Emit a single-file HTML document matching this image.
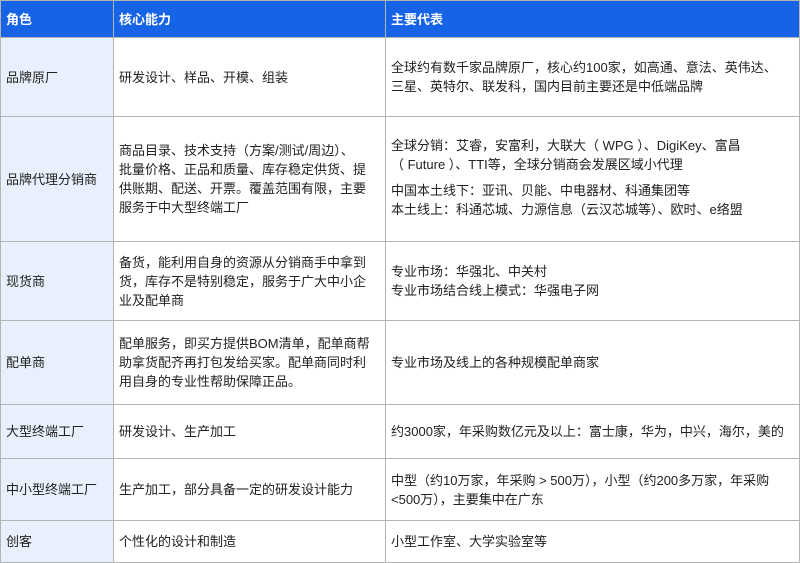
<!DOCTYPE html>
<html><head><meta charset="utf-8"><style>
*{margin:0;padding:0;box-sizing:border-box}
body{width:800px;height:563px;overflow:hidden;background:#fff;font-family:"Liberation Sans","Noto Sans CJK SC",sans-serif;font-size:13px;color:#222}
.c{position:absolute;display:flex;align-items:center;padding:0 5px;line-height:19px;border-right:1px solid #b4b4b4;border-bottom:1px solid #b4b4b4;white-space:nowrap}
.h{background:#1763e6;color:#fff;font-weight:bold}
.f{background:#e8f0fd}
</style></head><body>
<div class="c h" style="left:0;top:0;width:114px;height:38px;border-left:1px solid #b4b4b4;border-top:1px solid #b4b4b4">角色</div>
<div class="c h" style="left:114px;top:0;width:272px;height:38px;border-top:1px solid #b4b4b4">核心能力</div>
<div class="c h" style="left:386px;top:0;width:414px;height:38px;border-top:1px solid #b4b4b4">主要代表</div>

<div class="c f" style="left:0;top:38px;width:114px;height:79px;border-left:1px solid #b4b4b4">品牌原厂</div>
<div class="c" style="left:114px;top:38px;width:272px;height:79px">研发设计、样品、开模、组装</div>
<div class="c" style="left:386px;top:38px;width:414px;height:79px">全球约有数千家品牌原厂，核心约100家，如高通、意法、英伟达、<br>三星、英特尔、联发科，国内目前主要还是中低端品牌</div>

<div class="c f" style="left:0;top:117px;width:114px;height:125px;border-left:1px solid #b4b4b4">品牌代理分销商</div>
<div class="c" style="left:114px;top:117px;width:272px;height:125px">商品目录、技术支持（方案/测试/周边）、<br>批量价格、正品和质量、库存稳定供货、提<br>供账期、配送、开票。覆盖范围有限，主要<br>服务于中大型终端工厂</div>
<div class="c" style="left:386px;top:117px;width:414px;height:125px;display:block;padding-top:19px">全球分销：艾睿，安富利，大联大（ WPG ）、DigiKey、富昌<br>（ Future ）、TTI等，全球分销商会发展区域小代理<div style="height:7px"></div>中国本土线下：亚讯、贝能、中电器材、科通集团等<br>本土线上：科通芯城、力源信息（云汉芯城等）、欧时、e络盟</div>

<div class="c f" style="left:0;top:242px;width:114px;height:79px;border-left:1px solid #b4b4b4">现货商</div>
<div class="c" style="left:114px;top:242px;width:272px;height:79px">备货，能利用自身的资源从分销商手中拿到<br>货，库存不是特别稳定，服务于广大中小企<br>业及配单商</div>
<div class="c" style="left:386px;top:242px;width:414px;height:79px">专业市场：华强北、中关村<br>专业市场结合线上模式：华强电子网</div>

<div class="c f" style="left:0;top:321px;width:114px;height:84px;border-left:1px solid #b4b4b4">配单商</div>
<div class="c" style="left:114px;top:321px;width:272px;height:84px">配单服务，即买方提供BOM清单，配单商帮<br>助拿货配齐再打包发给买家。配单商同时利<br>用自身的专业性帮助保障正品。</div>
<div class="c" style="left:386px;top:321px;width:414px;height:84px">专业市场及线上的各种规模配单商家</div>

<div class="c f" style="left:0;top:405px;width:114px;height:54px;border-left:1px solid #b4b4b4">大型终端工厂</div>
<div class="c" style="left:114px;top:405px;width:272px;height:54px">研发设计、生产加工</div>
<div class="c" style="left:386px;top:405px;width:414px;height:54px">约3000家，年采购数亿元及以上：富士康，华为，中兴，海尔，美的</div>

<div class="c f" style="left:0;top:459px;width:114px;height:62px;border-left:1px solid #b4b4b4">中小型终端工厂</div>
<div class="c" style="left:114px;top:459px;width:272px;height:62px">生产加工，部分具备一定的研发设计能力</div>
<div class="c" style="left:386px;top:459px;width:414px;height:62px">中型（约10万家，年采购 &gt; 500万），小型（约200多万家，年采购<br>&lt;500万），主要集中在广东</div>

<div class="c f" style="left:0;top:521px;width:114px;height:42px;border-left:1px solid #b4b4b4">创客</div>
<div class="c" style="left:114px;top:521px;width:272px;height:42px">个性化的设计和制造</div>
<div class="c" style="left:386px;top:521px;width:414px;height:42px">小型工作室、大学实验室等</div>
</body></html>
